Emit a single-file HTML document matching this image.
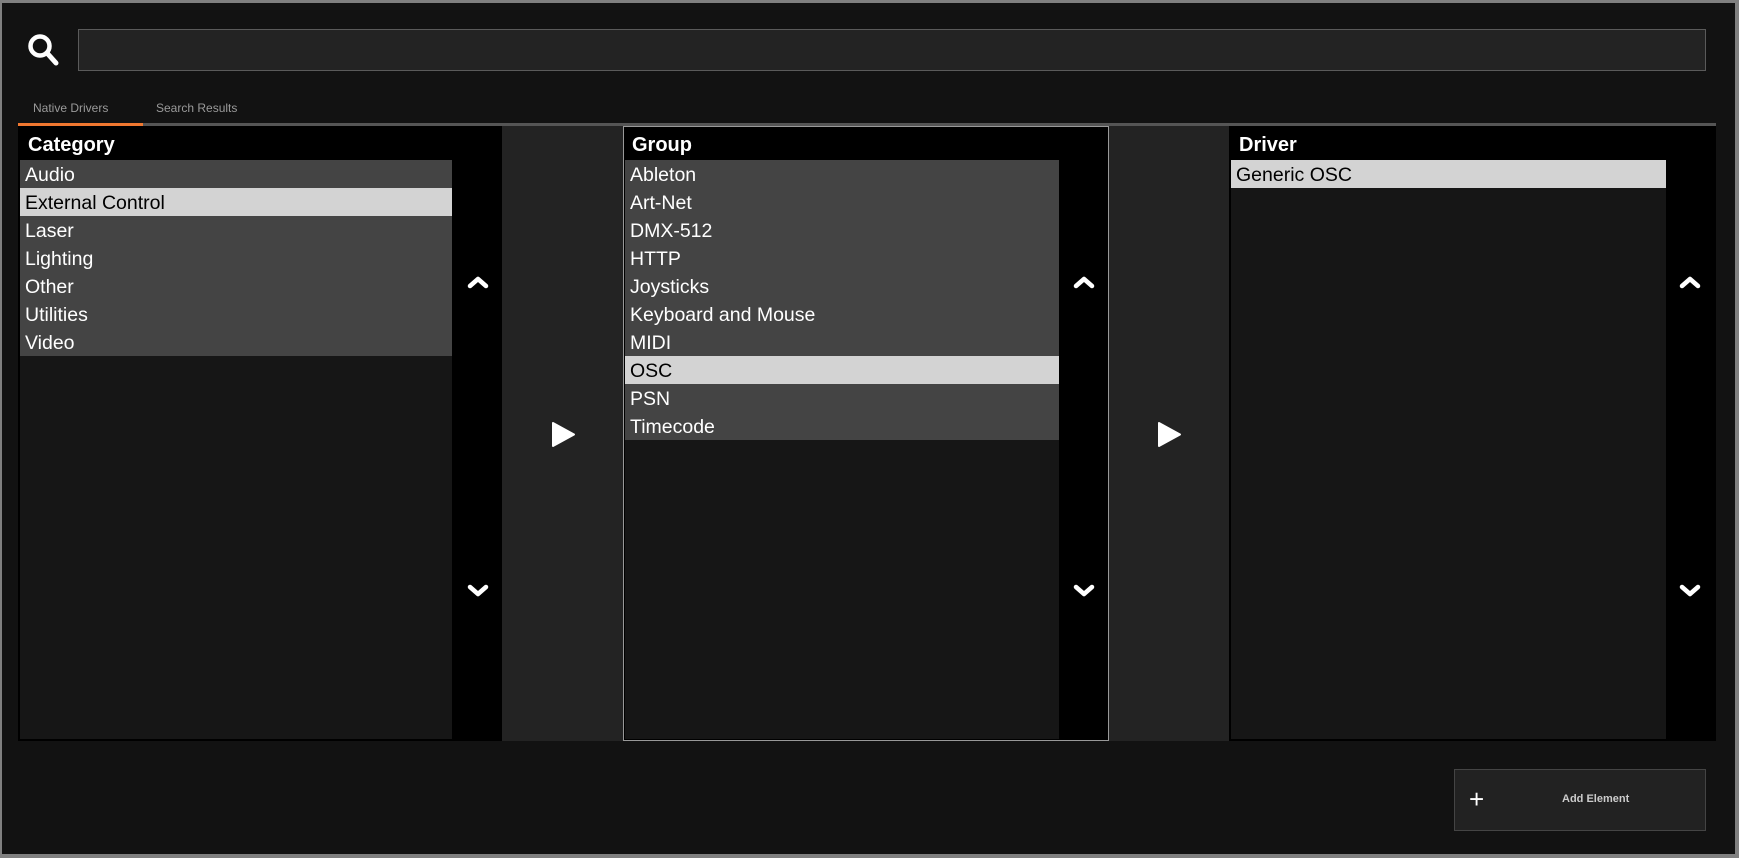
<!DOCTYPE html>
<html><head><meta charset="utf-8"><style>
*{margin:0;padding:0;box-sizing:border-box}
body{width:1739px;height:858px;background:#808080;font-family:"Liberation Sans",sans-serif;overflow:hidden;position:relative}
#main{position:absolute;left:2px;top:3px;width:1733px;height:851px;background:#121212}
.abs{position:absolute}
.list{position:absolute;background:#161616}
.row{height:28px;line-height:30px;font-size:19.5px;color:#fff;background:#444;padding-left:5px}
.row.sel{background:#d3d3d3;color:#000}
.hdr{position:absolute;color:#fff;font-weight:bold;font-size:20px}
.scroll{position:absolute;background:#000}
.gap{position:absolute;background:#232323}
</style></head><body>
<div id="main"></div>
<svg class="abs" style="left:27px;top:33px" width="34" height="36" viewBox="0 0 34 36"><circle cx="13" cy="13" r="9.5" fill="none" stroke="#fff" stroke-width="4.5"/><line x1="20" y1="20" x2="29" y2="30" stroke="#fff" stroke-width="5" stroke-linecap="round"/></svg>
<div class="abs" style="left:78px;top:29px;width:1628px;height:42px;background:#232323;border:1px solid #5a5a5a"></div>
<div class="abs" style="left:33px;top:101px;font-size:12px;color:#9a9a9a">Native Drivers</div>
<div class="abs" style="left:156px;top:101px;font-size:12px;color:#9a9a9a">Search Results</div>
<div class="abs" style="left:18px;top:123px;width:1698px;height:3px;background:#555"></div>
<div class="abs" style="left:18px;top:123px;width:125px;height:3px;background:#f07830"></div>
<div class="abs" style="left:18px;top:126px;width:1698px;height:615px;background:#000"></div>
<div class="hdr" style="left:28px;top:134px">Category</div>
<div class="list" style="left:20px;top:160px;width:432px;height:579px">
<div class="row">Audio</div><div class="row sel">External Control</div><div class="row">Laser</div><div class="row">Lighting</div><div class="row">Other</div><div class="row">Utilities</div><div class="row">Video</div></div>
<div class="gap" style="left:502px;top:126px;width:121px;height:615px"></div>
<div class="abs" style="left:623px;top:126px;width:486px;height:615px;border:1px solid #999"></div>
<div class="hdr" style="left:632px;top:134px">Group</div>
<div class="list" style="left:625px;top:160px;width:434px;height:579px">
<div class="row">Ableton</div><div class="row">Art-Net</div><div class="row">DMX-512</div><div class="row">HTTP</div><div class="row">Joysticks</div><div class="row">Keyboard and Mouse</div><div class="row">MIDI</div><div class="row sel">OSC</div><div class="row">PSN</div><div class="row">Timecode</div></div>
<div class="gap" style="left:1109px;top:126px;width:120px;height:615px"></div>
<div class="hdr" style="left:1239px;top:134px">Driver</div>
<div class="list" style="left:1231px;top:160px;width:435px;height:579px">
<div class="row sel">Generic OSC</div></div>
<svg class="abs" style="left:0;top:0" width="1739" height="858">
<g fill="none" stroke="#fff" stroke-width="4.5" stroke-linecap="round" stroke-linejoin="round">
<polyline points="470,286 478,279 486,286"/><polyline points="470,587 478,594 486,587"/>
<polyline points="1076,286 1084,279 1092,286"/><polyline points="1076,587 1084,594 1092,587"/>
<polyline points="1682,286 1690,279 1698,286"/><polyline points="1682,587 1690,594 1698,587"/>
</g>
<polygon points="553,423 553,446 574,434.5" fill="#fff" stroke="#fff" stroke-width="2" stroke-linejoin="round"/>
<polygon points="1159,423 1159,446 1180,434.5" fill="#fff" stroke="#fff" stroke-width="2" stroke-linejoin="round"/>
</svg>
<div class="abs" style="left:1454px;top:769px;width:252px;height:62px;background:#222;border:1px solid #444"></div>
<div class="abs" style="left:1469px;top:782px;font-size:26px;color:#fff;line-height:34px">+</div>
<div class="abs" style="left:1562px;top:793px;font-size:11px;font-weight:bold;color:#ccc">Add Element</div>
</body></html>
